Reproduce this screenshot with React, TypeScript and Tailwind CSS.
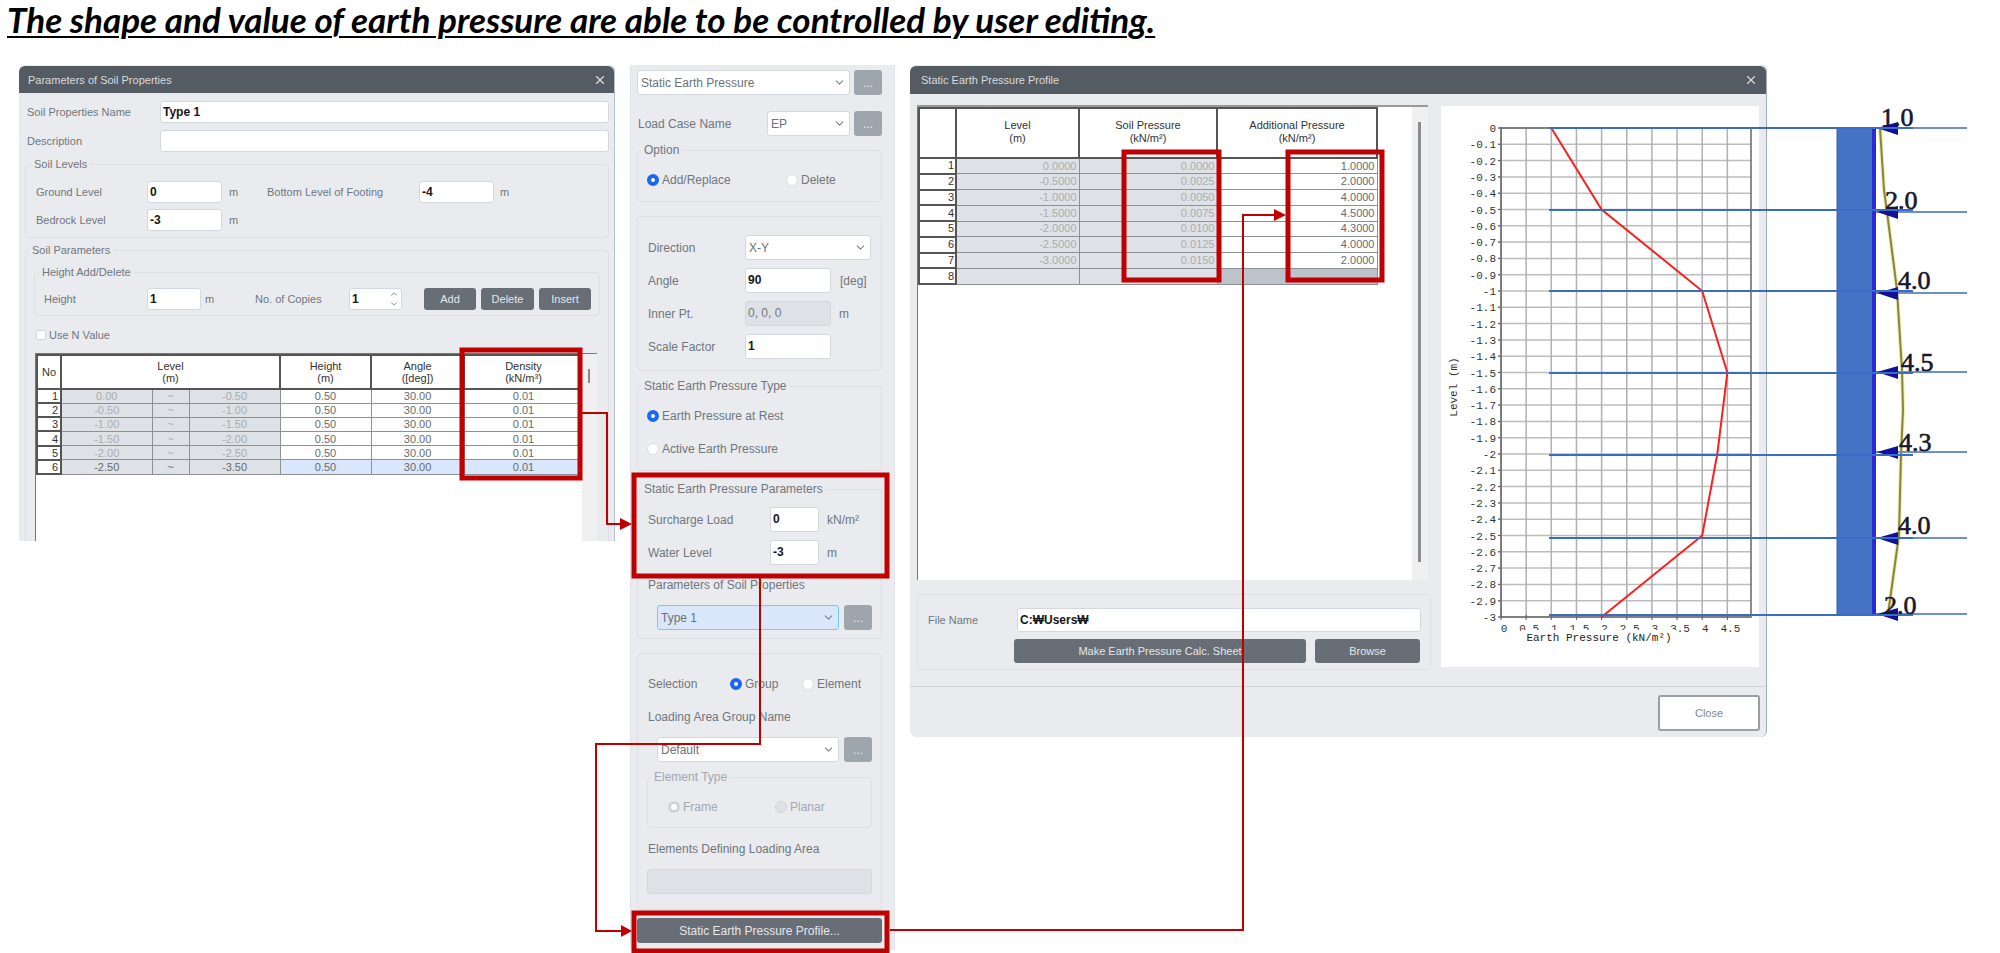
import { clsx } from 'clsx'
import { ChevronDown, ChevronUp, X } from 'lucide-react'
import { useState, type ReactNode } from 'react'

const soilRows = [
  ['0.00', '-0.50', '0.50', '30.00', '0.01'],
  ['-0.50', '-1.00', '0.50', '30.00', '0.01'],
  ['-1.00', '-1.50', '0.50', '30.00', '0.01'],
  ['-1.50', '-2.00', '0.50', '30.00', '0.01'],
  ['-2.00', '-2.50', '0.50', '30.00', '0.01'],
  ['-2.50', '-3.50', '0.50', '30.00', '0.01'],
]

const pressureRows = [
  ['0.0000', '0.0000', '1.0000'],
  ['-0.5000', '0.0025', '2.0000'],
  ['-1.0000', '0.0050', '4.0000'],
  ['-1.5000', '0.0075', '4.5000'],
  ['-2.0000', '0.0100', '4.3000'],
  ['-2.5000', '0.0125', '4.0000'],
  ['-3.0000', '0.0150', '2.0000'],
  ['', '', ''],
]

const profile = [
  { level: 0, pressure: 1 },
  { level: 0.5, pressure: 2 },
  { level: 1, pressure: 4 },
  { level: 1.5, pressure: 4.5 },
  { level: 2, pressure: 4.3 },
  { level: 2.5, pressure: 4 },
  { level: 3, pressure: 2 },
]

type FieldProps = {
  id: string
  label: string
  value?: string
  unit?: string
  labelClass: string
  inputClass: string
  unitClass?: string
  disabled?: boolean
}

const Field = ({ id, label, value, unit, labelClass, inputClass, unitClass, disabled }: FieldProps) => (
  <>
    <label htmlFor={id} className={clsx('shrink-0 whitespace-nowrap', labelClass)}>
      {label}
    </label>
    <input
      id={id}
      defaultValue={value}
      disabled={disabled}
      className={clsx(
        'min-w-0 rounded-[3px] border border-[#d3d8de] pb-px pl-[2px] text-[12px]',
        disabled ? 'bg-[#dee1e5] text-[#70767d]' : 'bg-white font-bold text-[#161616]',
        inputClass
      )}
    />
    {unit && <span className={unitClass}>{unit}</span>}
  </>
)

const Group = ({
  legend,
  className,
  legendClass,
  children,
}: {
  legend?: string
  className?: string
  legendClass?: string
  children: ReactNode
}) => (
  <fieldset className={clsx('min-w-0 rounded-[4px] border border-[#dcdfe4]', className)}>
    {legend && <legend className={clsx('ml-[3px] px-[3px] leading-[14px]', legendClass)}>{legend}</legend>}
    {children}
  </fieldset>
)

const Dropdown = ({
  label,
  options,
  className,
  active,
}: {
  label: string
  options: string[]
  className?: string
  active?: boolean
}) => (
  <div className={clsx('relative', className)}>
    <select
      aria-label={label}
      className={clsx(
        'block h-[25px] w-full appearance-none rounded-[3px] border pl-[3px] text-[12px] text-[#6c7279]',
        active ? 'border-[#6fcdf0] bg-[#dae7fb]' : 'border-[#d3d8de] bg-white'
      )}
    >
      {options.map((option) => (
        <option key={option}>{option}</option>
      ))}
    </select>
    <ChevronDown className="pointer-events-none absolute top-[6px] right-1 size-[13px] text-[#7d838a]" />
  </div>
)

const MoreButton = ({ label }: { label: string }) => (
  <button
    type="button"
    aria-label={label}
    className="h-[25px] w-7 shrink-0 rounded-[3px] bg-[#9fa5ad] text-[12px] text-[#e9ebee]"
  >
    ...
  </button>
)

const DarkButton = ({ className, children }: { className?: string; children: ReactNode }) => (
  <button type="button" className={clsx('rounded-[3px] bg-[#686e76] text-[#e4e6e9]', className)}>
    {children}
  </button>
)

const Radio = ({
  name,
  label,
  checked,
  disabled,
  className,
}: {
  name: string
  label: string
  checked?: boolean
  disabled?: boolean
  className?: string
}) => (
  <label className={clsx('flex items-center gap-[3px]', disabled && 'text-[#a3a8ae]', className)}>
    <input
      type="radio"
      name={name}
      defaultChecked={checked}
      disabled={disabled}
      className="size-3 appearance-none rounded-full border border-[#d9dce1] bg-white checked:border-4 checked:border-[#1a68ee] disabled:border-[#d0d4d9] disabled:bg-[#dee1e5] disabled:checked:border-[3px] disabled:checked:border-[#d0d4d9] disabled:checked:bg-white"
    />
    {label}
  </label>
)

const TitleBar = ({ children, className }: { children: string; className: string }) => (
  <div
    className={clsx(
      'flex items-center justify-between rounded-t-[6px] bg-[#555b63] text-[11px] text-[#d8dbdf]',
      className
    )}
  >
    <h2>{children}</h2>
    <button type="button" aria-label="Close window">
      <X className="size-[14px]" strokeWidth={2} />
    </button>
  </div>
)

const SoilTable = () => (
  <table className="h-[121px] w-full table-fixed border-collapse text-center leading-[12px] text-[#666b70]">
    <colgroup>
      <col className="w-[24px]" />
      <col className="w-[91px]" />
      <col className="w-[37px]" />
      <col className="w-[91px]" />
      <col className="w-[91px]" />
      <col className="w-[93px]" />
      <col />
    </colgroup>
    <thead>
      <tr className="h-[34px] text-[#333]">
        <th className="border-2 border-[#555] font-normal">No</th>
        <th colSpan={3} className="border-2 border-[#555] font-normal">
          Level
          <br />
          (m)
        </th>
        <th className="border-2 border-[#555] font-normal">
          Height
          <br />
          (m)
        </th>
        <th className="border-2 border-[#555] font-normal">
          Angle
          <br />
          ([deg])
        </th>
        <th className="border-2 border-[#555] pl-1 font-normal">
          Density
          <br />
          (kN/m³)
        </th>
      </tr>
    </thead>
    <tbody>
      {soilRows.map(([from, to, height, angle, density], index) => {
        const last = index === soilRows.length - 1
        const level = clsx('border border-[#8d9195] bg-[#dee1e5]', last ? 'text-[#666b70]' : 'text-[#a9adb2]')
        const value = clsx('border border-[#8d9195]', last && 'bg-[#dae6fb]')
        return (
          <tr key={from}>
            <td className="border-2 border-[#555] pr-[2px] text-right text-[#333]">{index + 1}</td>
            <td className={level}>{from}</td>
            <td className={level}>~</td>
            <td className={level}>{to}</td>
            <td className={value}>{height}</td>
            <td className={value}>{angle}</td>
            <td className={clsx('pl-1', value)}>{density}</td>
          </tr>
        )
      })}
    </tbody>
  </table>
)

const SoilProperties = () => {
  const [copies, setCopies] = useState(1)

  return (
    <section className="min-w-0 rounded-t-[6px] border-r border-[#b4c0d6] bg-[#e9ebef] pt-px text-[11px] leading-[14px] text-[#70767d]">
      <TitleBar className="h-[27px] pr-[7px] pl-[9px]">Parameters of Soil Properties</TitleBar>
      <div className="pt-2 pr-[5px] pl-[6px]">
        <div className="flex flex-col gap-[7px] pl-[2px]">
          <div className="flex items-center">
            <Field id="soil-name" label="Soil Properties Name" value="Type 1" labelClass="w-[133px]" inputClass="h-[22px] flex-1" />
          </div>
          <div className="flex items-center">
            <Field id="soil-desc" label="Description" labelClass="w-[133px]" inputClass="h-[22px] flex-1" />
          </div>
        </div>

        <Group legend="Soil Levels" className="mt-[5px] pb-[6px] pl-[2px]">
          <div className="flex flex-col gap-[6px] pt-[10px] pl-2">
            <div className="flex items-center">
              <Field id="ground" label="Ground Level" value="0" unit="m" labelClass="w-[111px]" inputClass="h-[22px] w-[75px]" unitClass="ml-[7px] w-[38px]" />
              <Field id="bottom" label="Bottom Level of Footing" value="-4" unit="m" labelClass="w-[152px]" inputClass="h-[22px] w-[75px]" unitClass="ml-[6px]" />
            </div>
            <div className="flex items-center">
              <Field id="bedrock" label="Bedrock Level" value="-3" unit="m" labelClass="w-[111px]" inputClass="h-[22px] w-[75px]" unitClass="ml-[7px]" />
            </div>
          </div>
        </Group>

        <Group legend="Soil Parameters" className="mt-[5px] rounded-b-none border-b-0">
          <div className="px-2 pt-2">
            <Group legend="Height Add/Delete" className="pr-2 pb-[5px] pl-[1px]">
              <div className="flex items-center pt-[9px] pl-2">
                <Field id="height" label="Height" value="1" unit="m" labelClass="w-[103px]" inputClass="h-[22px] w-[54px]" unitClass="ml-1 w-[50px]" />
                <label htmlFor="copies" className="w-[94px]">
                  No. of Copies
                </label>
                <div className="flex h-[22px] w-[53px] items-center rounded-[3px] border border-[#d3d8de] bg-white pr-[2px]">
                  <input
                    id="copies"
                    value={copies}
                    onChange={(e) => setCopies(Number(e.target.value) || 1)}
                    className="w-full min-w-0 pl-[2px] text-[12px] font-bold text-[#161616]"
                  />
                  <div className="flex flex-col">
                    <button type="button" aria-label="More copies" onClick={() => setCopies(copies + 1)}>
                      <ChevronUp className="size-[10px]" />
                    </button>
                    <button type="button" aria-label="Fewer copies" onClick={() => setCopies(Math.max(1, copies - 1))}>
                      <ChevronDown className="size-[10px]" />
                    </button>
                  </div>
                </div>
                <div className="ml-auto flex gap-[5px]">
                  <DarkButton className="h-[22px] w-[52px]">Add</DarkButton>
                  <DarkButton className="h-[22px] w-[53px]">Delete</DarkButton>
                  <DarkButton className="h-[22px] w-[52px]">Insert</DarkButton>
                </div>
              </div>
            </Group>
            <label className="mt-3 ml-[2px] flex items-center gap-[3px]">
              <input type="checkbox" className="size-[10px] appearance-none rounded-[2px] border border-[#d3d8de] bg-white checked:bg-[#1a68ee]" />
              Use N Value
            </label>
            <div className="mt-[11px] mr-[3px] ml-px flex h-[188px] border-t border-[#777]">
              <div className="min-w-0 flex-1 border-l border-[#777] bg-white pr-[2px]">
                <SoilTable />
              </div>
              <div className="w-[15px] bg-[#f0f0f0] pt-[15px] pl-[6px]">
                <div className="h-[14px] w-[2px] bg-[#85898e]" />
              </div>
            </div>
          </div>
        </Group>
      </div>
    </section>
  )
}

const LoadPanel = () => (
  <section className="min-w-0 border-x border-[#e0e3e8] bg-[#e9ebef] px-[6px] pt-[5px] pb-[7px] text-[12px] leading-[14px] text-[#70767d]">
    <div className="flex gap-1 pr-[6px]">
      <Dropdown label="Load type" options={['Static Earth Pressure']} className="flex-1" />
      <MoreButton label="Load type options" />
    </div>
    <div className="mt-4 flex items-center gap-1 pr-[6px]">
      <span className="flex-1 pl-px">Load Case Name</span>
      <Dropdown label="Load Case Name" options={['EP']} className="w-[83px]" />
      <MoreButton label="Load case options" />
    </div>

    <Group legend="Option" className="mt-[7px] mr-[6px] h-[59px]">
      <div className="flex items-center pt-4 pl-[9px]">
        <Radio name="option" label="Add/Replace" checked className="w-[139px]" />
        <Radio name="option" label="Delete" />
      </div>
    </Group>

    <Group className="mt-[14px] mr-[6px] flex flex-col gap-2 px-[10px] pt-[18px] pb-[11px]">
      <div className="flex items-center">
        <span className="w-[97px]">Direction</span>
        <Dropdown label="Direction" options={['X-Y']} className="flex-1" />
      </div>
      <div className="flex items-center">
        <Field id="angle" label="Angle" value="90" unit="[deg]" labelClass="w-[97px]" inputClass="h-[25px] w-[86px]" unitClass="ml-[9px]" />
      </div>
      <div className="flex items-center">
        <Field id="inner" label="Inner Pt." value="0, 0, 0" unit="m" labelClass="w-[97px]" inputClass="h-[25px] w-[86px]" unitClass="ml-2" disabled />
      </div>
      <div className="flex items-center">
        <Field id="scale" label="Scale Factor" value="1" labelClass="w-[97px]" inputClass="h-[25px] w-[86px]" />
      </div>
    </Group>

    <Group legend="Static Earth Pressure Type" className="mt-2 mr-[6px] h-[92px]">
      <div className="flex flex-col gap-[19px] pt-4 pl-[9px]">
        <Radio name="pressure-type" label="Earth Pressure at Rest" checked />
        <Radio name="pressure-type" label="Active Earth Pressure" />
      </div>
    </Group>

    <Group legend="Static Earth Pressure Parameters" className="mt-[11px] mr-[6px] rounded-b-none border-b-0">
      <div className="flex flex-col gap-2 pt-[11px] pl-[10px]">
        <div className="flex items-center">
          <Field id="surcharge" label="Surcharge Load" value="0" unit="kN/m²" labelClass="w-[122px]" inputClass="h-[25px] w-[49px]" unitClass="ml-2" />
        </div>
        <div className="flex items-center">
          <Field id="water" label="Water Level" value="-3" unit="m" labelClass="w-[122px]" inputClass="h-[25px] w-[49px]" unitClass="ml-2" />
        </div>
      </div>
    </Group>
    <Group className="mr-[6px] rounded-t-none border-t-0 pt-[13px] pr-[9px] pb-2 pl-[10px]">
      <p>Parameters of Soil Properties</p>
      <div className="mt-[13px] flex gap-[5px] pl-[9px]">
        <Dropdown label="Soil properties" options={['Type 1']} className="flex-1" active />
        <MoreButton label="Soil properties options" />
      </div>
    </Group>

    <Group className="mt-[14px] mr-[6px] px-[9px] pt-[23px] pb-[15px]">
      <div className="flex items-center pl-px">
        <span className="w-[82px]">Selection</span>
        <Radio name="selection" label="Group" checked className="w-[72px]" />
        <Radio name="selection" label="Element" />
      </div>
      <p className="mt-[19px] pl-px">Loading Area Group Name</p>
      <div className="mt-[13px] flex gap-[5px] pl-[10px]">
        <Dropdown label="Loading Area Group Name" options={['Default']} className="flex-1" />
        <MoreButton label="Group options" />
      </div>
      <Group legend="Element Type" className="mt-2 h-[58px]" legendClass="text-[#a3a8ae]">
        <div className="flex items-center pt-4 pl-5">
          <Radio name="element-type" label="Frame" checked disabled className="w-[107px]" />
          <Radio name="element-type" label="Planar" disabled />
        </div>
      </Group>
      <label htmlFor="elements" className="mt-[14px] block pl-px">
        Elements Defining Loading Area
      </label>
      <input id="elements" disabled className="mt-[13px] block h-[25px] w-full rounded-[3px] border border-[#d3d8de] bg-[#dee1e5]" />
    </Group>
    <div className="mt-2 flex pr-[6px]">
      <DarkButton className="h-[25px] w-full">Static Earth Pressure Profile...</DarkButton>
    </div>
  </section>
)

const PressureTable = () => (
  <table className="h-[178px] w-[460px] table-fixed border-collapse text-right leading-[13px]">
    <colgroup>
      <col className="w-[37px]" />
      <col className="w-[123px]" />
      <col className="w-[138px]" />
      <col className="w-[160px]" />
    </colgroup>
    <thead>
      <tr className="h-[50px] text-center text-[#333]">
        <th className="border-2 border-[#555]" aria-label="Row" />
        <th className="border-2 border-[#555] pb-[3px] font-normal">
          Level
          <br />
          (m)
        </th>
        <th className="border-2 border-[#555] pb-[3px] font-normal">
          Soil Pressure
          <br />
          (kN/m²)
        </th>
        <th className="border-2 border-[#555] pb-[3px] font-normal">
          Additional Pressure
          <br />
          (kN/m²)
        </th>
      </tr>
    </thead>
    <tbody>
      {pressureRows.map(([level, soil, additional], index) => (
        <tr key={index}>
          <td className="border-2 border-[#555] pr-px text-[#333]">{index + 1}</td>
          <td className="border border-[#8d9195] bg-[#dee1e5] pr-[2px] text-[#a9adb2]">{level}</td>
          <td className="border border-[#8d9195] bg-[#dee1e5] pr-[2px] text-[#a9adb2]">{soil}</td>
          <td className={clsx('border border-[#8d9195] pr-[2px] text-[#666b70]', !additional && 'bg-[#bdc3ca]')}>
            {additional}
          </td>
        </tr>
      ))}
    </tbody>
  </table>
)

const chartX = (pressure: number) => 60 + pressure * 50.3
const chartY = (level: number) => 22 + level * 163

const ProfileChart = () => (
  <svg viewBox="0 0 318 561" className="mt-px h-[561px] w-full bg-white font-['Liberation_Mono',monospace] text-[11px]">
    {Array.from({ length: 31 }, (_, i) => (
      <g key={i}>
        <line x1={57} x2={310} y1={chartY(i / 10)} y2={chartY(i / 10)} stroke="#bdbdbd" strokeWidth={1.5} />
        <line x1={57} x2={61} y1={chartY(i / 10)} y2={chartY(i / 10)} stroke="#555" />
        <text x={55} y={chartY(i / 10) + 4} textAnchor="end" fill="#333">
          {i === 0 ? '0' : `-${i / 10}`}
        </text>
      </g>
    ))}
    {Array.from({ length: 10 }, (_, i) => (
      <g key={i}>
        <line x1={chartX(i / 2)} x2={chartX(i / 2)} y1={22} y2={511} stroke="#b0b0b0" strokeWidth={1.5} />
        <line x1={chartX(i / 2)} x2={chartX(i / 2)} y1={509} y2={514} stroke="#555" />
        <text x={chartX(i / 2) + 3} y={526} textAnchor="middle" fill="#333">
          {i / 2}
        </text>
      </g>
    ))}
    <rect x={60} y={22} width={250} height={489} fill="none" stroke="#666" strokeWidth={1.5} />
    <polyline
      points={profile.map((p) => `${chartX(p.pressure)},${chartY(p.level)}`).join(' ')}
      fill="none"
      stroke="#fb2020"
      strokeWidth={2}
    />
    <rect x={80} y={524} width={155} height={14} fill="#fff" />
    <text x={158} y={535} textAnchor="middle" fill="#222">
      Earth Pressure (kN/m²)
    </text>
    <text transform="translate(16 281) rotate(-90)" textAnchor="middle" fill="#333">
      Level (m)
    </text>
  </svg>
)

const ProfileWindow = () => (
  <section className="min-w-0 rounded-[6px] border-r border-[#a0abbe] bg-[#e9ebef] pt-px text-[11px] leading-[14px] text-[#70767d]">
    <TitleBar className="h-7 pr-[8px] pl-[11px]">Static Earth Pressure Profile</TitleBar>
    <div className="grid grid-cols-[514fr_318fr] gap-[10px] pt-[11px] pr-[7px] pb-[16px] pl-[7px]">
      <div className="min-w-0">
        <div className="mr-[3px] flex h-[475px] border-t-2 border-[#999]">
          <div className="flex-1 border-l border-[#777] bg-white">
            <PressureTable />
          </div>
          <div className="w-4 bg-[#f0f0f0] pt-[15px] pl-[6px]">
            <div className="h-[440px] w-[3px] bg-[#8a8e92]" />
          </div>
        </div>
        <Group className="mt-[14px] h-[76px] pt-[13px] pr-[9px] pl-[10px]">
          <div className="flex items-center">
            <Field id="file" label="File Name" value="C:₩Users₩" labelClass="w-[89px]" inputClass="h-6 flex-1" />
          </div>
          <div className="mt-[7px] flex gap-[9px] pr-px pl-[86px]">
            <DarkButton className="h-6 flex-1">Make Earth Pressure Calc. Sheet</DarkButton>
            <DarkButton className="h-6 w-[105px]">Browse</DarkButton>
          </div>
        </Group>
      </div>
      <ProfileChart />
    </div>
    <div className="flex justify-end border-t border-[#d0d5da] pt-2 pr-[6px] pb-[6px]">
      <button type="button" className="h-9 w-[102px] rounded-[3px] border-2 border-[#9a9fa6] bg-white text-[#85898e]">
        Close
      </button>
    </div>
  </section>
)

const wallLoads = [
  { y: 128, label: '1.0', x: 1881, base: 126 },
  { y: 212, label: '2.0', x: 1885, base: 209 },
  { y: 293, label: '4.0', x: 1898, base: 289 },
  { y: 372, label: '4.5', x: 1901, base: 371 },
  { y: 452, label: '4.3', x: 1899, base: 451 },
  { y: 538, label: '4.0', x: 1898, base: 534 },
  { y: 614, label: '2.0', x: 1884, base: 614 },
]

const pressureCurve = '1880,128 1884,190 1887,212 1897,290 1902,370 1903,410 1901,455 1899,535 1890,600 1888,614'

const levelLines = [128, 210, 291, 373, 455, 538, 615]

// Wall drawing, highlight boxes and connectors, drawn over the windows
const Annotations = () => (
  <svg
    viewBox="0 0 2000 953"
    preserveAspectRatio="none"
    className="pointer-events-none absolute inset-0 h-full w-full"
    aria-hidden="true"
  >
    <rect x={1837} y={128} width={36} height={487} fill="#4472c4" stroke="#3560b0" />
    <rect x={1872} y={128} width={4} height={487} fill="#2a2ad8" />
    <polyline points={pressureCurve} fill="none" stroke="#efedb0" strokeWidth={4} />
    <polyline points={pressureCurve} fill="none" stroke="#85853c" strokeWidth={2} />
    {wallLoads.map((load) => (
      <g key={load.y}>
        <line x1={1876} x2={1967} y1={load.y} y2={load.y} stroke="#6f8fc6" strokeWidth={2} />
        <path d={`M1877 ${load.y} L1898 ${load.y - 6} V${load.y + 7} Z`} fill="#10109c" />
        <text
          x={load.x}
          y={load.base}
          fontSize={26}
          fontFamily="Liberation Serif, serif"
          fill="#16162c"
          stroke="#16162c"
          strokeWidth={0.6}
        >
          {load.label}
        </text>
      </g>
    ))}
    {levelLines.map((y) => (
      <line key={y} x1={1549} x2={1913} y1={y} y2={y} stroke="#3a6cc6" strokeWidth={2} />
    ))}

    <g fill="none" stroke="#c00000" strokeWidth={5}>
      <rect x={462} y={350} width={118} height={128} />
      <rect x={634} y={475} width={253} height={101} />
      <rect x={634} y={913} width={253} height={38} />
      <rect x={1124} y={152} width={95} height={128} />
      <rect x={1288} y={152} width={94} height={128} />
    </g>
    <g fill="none" stroke="#c00000" strokeWidth={2}>
      <path d="M582 413H607V524H622" />
      <path d="M760 578V744H596V931H622" />
      <path d="M890 930H1243V215H1276" />
    </g>
    <g fill="#c00000">
      <path d="M620 518L632 524L620 530Z" />
      <path d="M621 925L632 931L621 937Z" />
      <path d="M1274 209L1286 215L1274 221Z" />
    </g>
  </svg>
)

export default function App() {
  return (
    <main className="relative bg-white pb-[3px] font-['Liberation_Sans','Noto_Sans_CJK_KR',sans-serif]">
      <h1 className="h-[65px] pl-[7px] font-['Lato',sans-serif] text-[35px] leading-[38px] font-bold whitespace-nowrap text-black italic underline decoration-2 underline-offset-[3px]">
        The shape and value of earth pressure are able to be controlled by user editing.
      </h1>
      <div className="grid grid-cols-[596fr_265fr_857fr_218fr] items-start gap-x-[15px] pl-[19px]">
        <SoilProperties />
        <LoadPanel />
        <ProfileWindow />
      </div>
      <Annotations />
    </main>
  )
}
